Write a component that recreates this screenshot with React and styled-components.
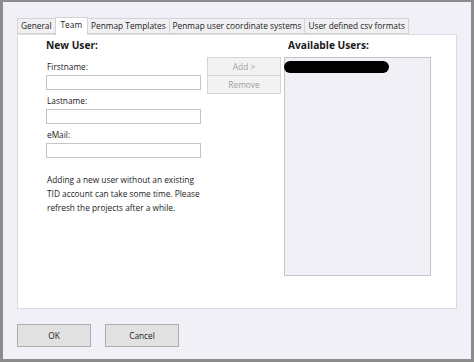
import styled, { createGlobalStyle } from "styled-components";

const Global = createGlobalStyle`
  html, body {
    margin: 0;
    padding: 0;
    background: #ffffff;
  }
  body {
    font-family: "Open Sans", "Noto Sans", sans-serif;
  }
`;

const Window = styled.div`
  box-sizing: border-box;
  width: 474px;
  height: 362px;
  border-style: solid;
  border-color: #8c8c8c;
  border-width: 2px 3px 3px 3px;
  background: #f1f0f6;
  display: flex;
  flex-direction: column;
  padding: 14px 14px 0 14px;
`;

const TabStrip = styled.div`
  display: flex;
  align-items: flex-end;
  height: 18px;
  padding-left: 1px;
`;

const Tab = styled.div`
  box-sizing: border-box;
  height: ${(p) => (p.active ? "18px" : "16px")};
  padding: 0 ${(p) => (p.active ? "5px" : "3px")};
  border: 1px solid #d4d4d8;
  border-bottom: ${(p) => (p.active ? "none" : "1px solid #d4d4d8")};
  margin-left: -1px;
  margin-bottom: ${(p) => (p.active ? "-1px" : "0")};
  background: ${(p) => (p.active ? "#ffffff" : "#f0f0f2")};
  font-size: 8.3px;
  line-height: 14px;
  color: #1a1a1a;
  white-space: nowrap;
  position: relative;
  z-index: ${(p) => (p.active ? 1 : 0)};
`;

const Panel = styled.div`
  box-sizing: border-box;
  width: 440px;
  height: 275px;
  background: #ffffff;
  border: 1px solid #dcdce0;
  padding: 3px 0 0 28px;
  display: grid;
  grid-template-columns: 155px 74px 147px;
  column-gap: 6px;
  align-items: start;
`;

const Column = styled.div`
  display: flex;
  flex-direction: column;
`;

const Heading = styled.div`
  font-weight: 700;
  font-size: 10.2px;
  line-height: 15px;
  color: #1a1a1a;
  padding-left: ${(p) => p.indent || 0}px;
  height: 19px;
`;

const Label = styled.div`
  font-size: 8.3px;
  line-height: 12px;
  color: #1a1a1a;
  margin-top: ${(p) => p.gap || 0}px;
  height: 14px;
  padding-left: 1px;
`;

const Input = styled.div`
  box-sizing: border-box;
  width: 155px;
  height: 15px;
  border: 1px solid #c4c4c8;
  background: #ffffff;
`;

const Note = styled.p`
  margin: 15px 0 0 1px;
  font-size: 8.3px;
  line-height: 14px;
  color: #1a1a1a;
  width: 160px;
`;

const SideButtons = styled.div`
  display: flex;
  flex-direction: column;
  margin-top: 19px;
`;

const SideButton = styled.div`
  box-sizing: border-box;
  width: 74px;
  height: 19px;
  border: 1px solid #d6d6d8;
  background: #f2f2f2;
  color: #9e9e9e;
  font-size: 8.3px;
  line-height: 17px;
  text-align: center;
  & + & {
    margin-top: -1px;
  }
`;

const ListBox = styled.div`
  box-sizing: border-box;
  width: 147px;
  height: 219px;
  margin-left: -3px;
  border: 1px solid #c6c6ca;
  background: #f1f0f6;
  padding-top: 3px;
`;

const Redacted = styled.div`
  width: 105px;
  height: 12px;
  background: #000000;
  border-radius: 6px;
  margin-left: -1px;
`;

const Footer = styled.div`
  display: flex;
  gap: 14px;
  padding: 15px 0 0 0;
`;

const DialogButton = styled.div`
  box-sizing: border-box;
  width: 74px;
  height: 23px;
  border: 1px solid #adadad;
  background: #e1e1e1;
  color: #1a1a1a;
  font-size: 8.3px;
  line-height: 21px;
  text-align: center;
`;

const tabs = [
  "General",
  "Team",
  "Penmap Templates",
  "Penmap user coordinate systems",
  "User defined csv formats",
];

export default function App() {
  return (
    <>
      <Global />
      <Window>
        <TabStrip>
          {tabs.map((t) => (
            <Tab key={t} active={t === "Team"}>
              {t}
            </Tab>
          ))}
        </TabStrip>
        <Panel>
          <Column>
            <Heading>New User:</Heading>
            <Label gap={4}>Firstname:</Label>
            <Input />
            <Label gap={5}>Lastname:</Label>
            <Input />
            <Label gap={5}>eMail:</Label>
            <Input />
            <Note>
              Adding a new user without an existing TID account can take some
              time. Please refresh the projects after a while.
            </Note>
          </Column>
          <SideButtons>
            <SideButton>Add &gt;</SideButton>
            <SideButton>Remove</SideButton>
          </SideButtons>
          <Column>
            <Heading indent={1}>Available Users:</Heading>
            <ListBox>
              <Redacted />
            </ListBox>
          </Column>
        </Panel>
        <Footer>
          <DialogButton>OK</DialogButton>
          <DialogButton>Cancel</DialogButton>
        </Footer>
      </Window>
    </>
  );
}
